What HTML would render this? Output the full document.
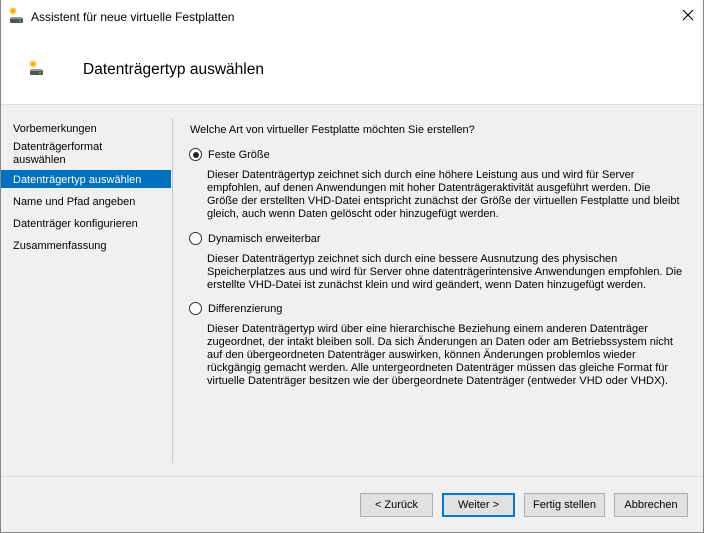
<!DOCTYPE html>
<html><head><meta charset="utf-8"><style>
*{margin:0;padding:0;box-sizing:border-box}
body{width:704px;height:533px;overflow:hidden;background:#f0f0f0;font-family:"Liberation Sans",sans-serif;font-size:11px;color:#000;position:relative}
.abs{position:absolute;white-space:nowrap}
.frame{position:absolute;left:0;top:0;width:704px;height:533px;border:1px solid #888;border-top:none}
.title{position:absolute;left:1px;top:0;width:702px;height:105px;background:#fff;border-bottom:1px solid #dcdcdc}
.nav div{position:absolute;left:13px;white-space:nowrap;font-size:11px}
.sel{position:absolute;left:1px;top:170px;width:170px;height:18px;background:#0070c0}
.p{position:absolute;left:207px;line-height:13px;white-space:nowrap}
.radio{position:absolute;left:189px;width:13px;height:13px;border:1px solid #333;border-radius:50%;background:#fff}
.radio.on::after{content:"";position:absolute;left:2.5px;top:2.5px;width:6px;height:6px;border-radius:50%;background:#222}
.btn{position:absolute;top:493px;height:24px;background:#e1e1e1;border:1px solid #adadad;text-align:center;line-height:22px;font-size:11px}
.icon{position:absolute}
</style></head><body>
<div class="title"></div>
<div class="frame"></div>
<svg class="icon" style="left:8px;top:7px" width="16" height="16"><circle cx="5" cy="4" r="2.5" fill="#f5b000"/><path d="M5 0v8M1 4h8M2 1l6 6M8 1l-6 6" stroke="#f5b000" stroke-width="0.8"/><rect x="2" y="11" width="13" height="5" rx="1" fill="#555"/><rect x="3" y="10" width="11" height="2" fill="#999"/><rect x="11" y="13" width="2" height="1.5" fill="#3c3"/></svg>
<div class="abs" style="left:31px;top:10px;font-size:12px">Assistent für neue virtuelle Festplatten</div>
<svg class="abs" style="left:682px;top:9px" width="12" height="12"><path d="M1 1L11 11M11 1L1 11" stroke="#000" stroke-width="1.1"/></svg>
<svg class="icon" style="left:29px;top:60px" width="16" height="16"><circle cx="4" cy="4" r="2.3" fill="#f5b000"/><path d="M4 0v8M0 4h8M1 1l6 6M7 1l-6 6" stroke="#f5b000" stroke-width="0.8"/><rect x="1" y="10" width="13" height="5" rx="1" fill="#555"/><rect x="2" y="9" width="11" height="2" fill="#999"/><rect x="10" y="12" width="2" height="1.5" fill="#3c3"/></svg>
<div class="abs" style="left:83px;top:61px;font-size:15.5px">Datenträgertyp auswählen</div>
<div class="sel"></div>
<div class="nav">
<div style="top:123px">Vorbemerkungen</div>
<div style="top:141px;line-height:13px">Datenträgerformat<br>auswählen</div>
<div style="top:174px;color:#fff">Datenträgertyp auswählen</div>
<div style="top:196px">Name und Pfad angeben</div>
<div style="top:218px">Datenträger konfigurieren</div>
<div style="top:240px">Zusammenfassung</div>
</div>
<div class="abs" style="left:172px;top:118px;width:1px;height:345px;background:#c8c8c8"></div>
<div class="abs" style="left:190px;top:124px">Welche Art von virtueller Festplatte möchten Sie erstellen?</div>
<div class="radio on" style="top:148px"></div>
<div class="abs" style="left:208px;top:149px">Feste Größe</div>
<div class="p" style="top:169px">Dieser Datenträgertyp zeichnet sich durch eine höhere Leistung aus und wird für Server<br>empfohlen, auf denen Anwendungen mit hoher Datenträgeraktivität ausgeführt werden. Die<br>Größe der erstellten VHD-Datei entspricht zunächst der Größe der virtuellen Festplatte und bleibt<br>gleich, auch wenn Daten gelöscht oder hinzugefügt werden.</div>
<div class="radio" style="top:232px"></div>
<div class="abs" style="left:208px;top:233px">Dynamisch erweiterbar</div>
<div class="p" style="top:253px">Dieser Datenträgertyp zeichnet sich durch eine bessere Ausnutzung des physischen<br>Speicherplatzes aus und wird für Server ohne datenträgerintensive Anwendungen empfohlen. Die<br>erstellte VHD-Datei ist zunächst klein und wird geändert, wenn Daten hinzugefügt werden.</div>
<div class="radio" style="top:302px"></div>
<div class="abs" style="left:208px;top:303px">Differenzierung</div>
<div class="p" style="top:323px">Dieser Datenträgertyp wird über eine hierarchische Beziehung einem anderen Datenträger<br>zugeordnet, der intakt bleiben soll. Da sich Änderungen an Daten oder am Betriebssystem nicht<br>auf den übergeordneten Datenträger auswirken, können Änderungen problemlos wieder<br>rückgängig gemacht werden. Alle untergeordneten Datenträger müssen das gleiche Format für<br>virtuelle Datenträger besitzen wie der übergeordnete Datenträger (entweder VHD oder VHDX).</div>
<div class="abs" style="left:1px;top:476px;width:702px;height:1px;background:#dcdcdc"></div>
<div class="btn" style="left:360px;width:73px">&lt; Zurück</div>
<div class="btn" style="left:442px;width:73px;border:2px solid #0078d7;line-height:20px">Weiter &gt;</div>
<div class="btn" style="left:524px;width:81px">Fertig stellen</div>
<div class="btn" style="left:614px;width:74px">Abbrechen</div>
</body></html>
